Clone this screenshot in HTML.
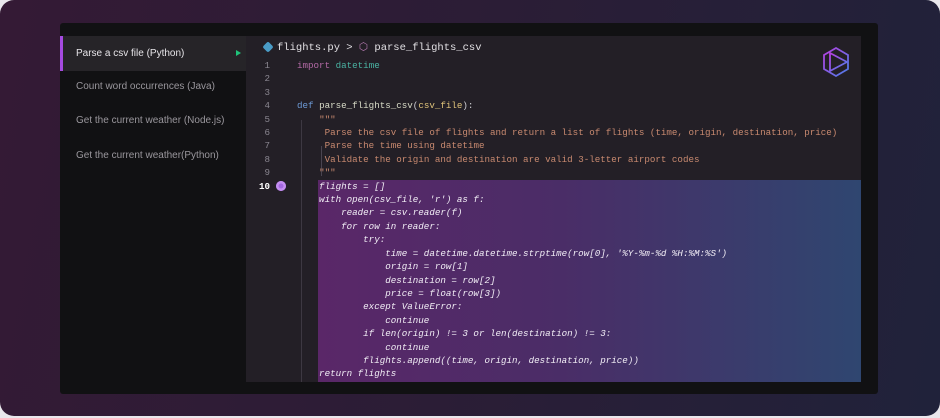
<!DOCTYPE html>
<html><head><style>
*{margin:0;padding:0;box-sizing:border-box}
html,body{width:940px;height:418px;background:#e9e7ec;overflow:hidden}
.card{position:absolute;left:0;top:0;width:940px;height:416px;border-radius:14px;background:linear-gradient(100deg,#341a35 0%,#2b1d36 50%,#20223a 100%)}
.panel{position:absolute;left:60px;top:23px;width:818px;height:371px;background:#111113;border-radius:3px}
.side{position:absolute;left:60px;top:38px;width:186px;font:10px "Liberation Sans",sans-serif;color:#9a979d}
.side div{height:34.5px;line-height:31px;padding-left:16px}
.side .act{background:#262428;color:#e6e4e8;border-left:3px solid #a54be0;padding-left:13px;position:relative;margin-top:-2px;line-height:35px}
.side .act:after{content:"";position:absolute;left:173px;top:14px;border-left:5px solid #1fc37a;border-top:3.5px solid transparent;border-bottom:3.5px solid transparent}
.ed{position:absolute;left:246px;top:36px;width:615px;height:346px;background:#231f26;overflow:hidden}
.sel{position:absolute;left:72px;top:144px;width:543px;height:202px;background:linear-gradient(90deg,#5a2768 0%,#4a2d67 45%,#2f4670 100%)}
.hdr{position:absolute;left:31px;top:5px;font:10.5px "Liberation Mono",monospace;color:#e2e0e4}
.code{position:absolute;left:0;top:23px;font:9.2px/13.4px "Liberation Mono",monospace;color:#cfcfd4;white-space:pre}
.ln{display:inline-block;width:24px;text-align:right;color:#8a8690;margin-right:27px}
.k{color:#b46aa6}.t{color:#4ab3a3}.d{color:#6d9bd8}.f{color:#d9dcc8}.a{color:#e0c37a}.s{color:#c98a70}
.it{font-style:italic;color:#f2eef6}
.vbar{position:absolute;left:55px;top:84px;width:1px;height:262px;background:#3d3842}
.vbar2{position:absolute;left:75px;top:110px;width:1px;height:30px;background:#4a4450}
</style></head><body>
<div class="card"></div>
<div class="panel"></div>
<div class="side">
<div class="act">Parse a csv file (Python)</div>
<div>Count word occurrences (Java)</div>
<div>Get the current weather (Node.js)</div>
<div>Get the current weather(Python)</div>
</div>
<div class="ed">
<div class="sel"></div>
<div class="vbar"></div>
<div class="vbar2"></div>
<div class="hdr"><span style="position:absolute;left:-13px;top:2px;width:8px;height:8px;background:#4a9cc7;transform:rotate(45deg);border-radius:2px"></span>flights.py &gt; <span style="color:#b57ab0">⬡</span> parse_flights_csv</div>
<svg style="position:absolute;left:575px;top:10px" width="30" height="32" viewBox="0 0 30 32"><defs><linearGradient id="g" x1="0" y1="0" x2="1" y2="1"><stop offset="0" stop-color="#b83fe0"/><stop offset="1" stop-color="#4b7ee8"/></linearGradient></defs><path d="M15 2 L27 9 V23 L15 30 L3 23 V9 Z" fill="none" stroke="url(#g)" stroke-width="1.8"/><path d="M9 7 V25 L26 16 Z" fill="none" stroke="url(#g)" stroke-width="1.8" stroke-linejoin="round"/></svg>
<span style="position:absolute;left:30px;top:145px;width:10px;height:10px;border-radius:50%;background:#a468e0;box-shadow:inset 0 0 0 2.5px #c38ef0"></span>
<div class="code"><span class="ln">1</span><span class="k">import</span> <span class="t">datetime</span>
<span class="ln">2</span>
<span class="ln">3</span>
<span class="ln">4</span><span class="d">def</span> <span class="f">parse_flights_csv</span>(<span class="a">csv_file</span>):
<span class="ln">5</span>    <span class="s">"""</span>
<span class="ln">6</span>     <span class="s">Parse the csv file of flights and return a list of flights (time, origin, destination, price)</span>
<span class="ln">7</span>     <span class="s">Parse the time using datetime</span>
<span class="ln">8</span>     <span class="s">Validate the origin and destination are valid 3-letter airport codes</span>
<span class="ln">9</span>    <span class="s">"""</span>
<span class="ln" style="color:#fff;font-weight:bold">10</span><span class="it">    flights = []</span>
<span class="ln"></span><span class="it">    with open(csv_file, 'r') as f:</span>
<span class="ln"></span><span class="it">        reader = csv.reader(f)</span>
<span class="ln"></span><span class="it">        for row in reader:</span>
<span class="ln"></span><span class="it">            try:</span>
<span class="ln"></span><span class="it">                time = datetime.datetime.strptime(row[0], '%Y-%m-%d %H:%M:%S')</span>
<span class="ln"></span><span class="it">                origin = row[1]</span>
<span class="ln"></span><span class="it">                destination = row[2]</span>
<span class="ln"></span><span class="it">                price = float(row[3])</span>
<span class="ln"></span><span class="it">            except ValueError:</span>
<span class="ln"></span><span class="it">                continue</span>
<span class="ln"></span><span class="it">            if len(origin) != 3 or len(destination) != 3:</span>
<span class="ln"></span><span class="it">                continue</span>
<span class="ln"></span><span class="it">            flights.append((time, origin, destination, price))</span>
<span class="ln"></span><span class="it">    return flights</span></div>
</div>
</body></html>
